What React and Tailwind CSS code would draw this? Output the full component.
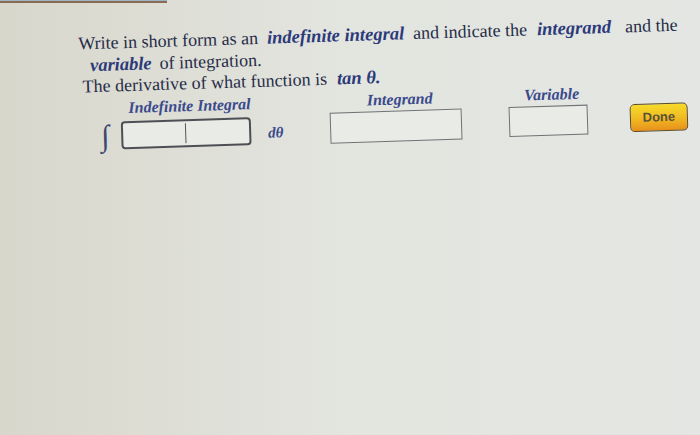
import React from "react";

const serif = { fontFamily: '"Liberation Serif", "Times New Roman", serif' };

function Box({ className }) {
  return <div className={`shrink-0 bg-[#e9ebe6] ${className}`} />;
}

export default function App() {
  return (
    <div
      className="relative w-[700px] h-[435px] overflow-hidden bg-gradient-to-r from-[#d8d7cc] via-[#e3e5df] to-[#e3e6e2]"
      style={serif}
    >
      {/* edge of the monitor frame */}
      <div className="h-[1px] w-[167px] bg-[#9fb4c4]" />
      <div className="h-[2px] w-[167px] bg-[#8a6a52]" />

      <div className="origin-top-left rotate-[-1.8deg] pt-[32px] text-[18px] leading-[22px] text-[#262c48]">
        {/* question text */}
        <div className="ml-[77px] whitespace-nowrap">
          <span>Write in short form as an</span>
          <span className="ml-[9px] text-[18.5px] font-bold italic text-[#2c3a7a]">indefinite integral</span>
          <span className="ml-[9px]">and indicate the</span>
          <span className="ml-[10px] text-[18.5px] font-bold italic text-[#2c3a7a]">integrand</span>
          <span className="ml-[14px]">and the</span>
        </div>
        <div className="ml-[88px] whitespace-nowrap">
          <span className="text-[18.5px] font-bold italic text-[#2c3a7a]">variable</span>
          <span className="ml-[8px]">of integration.</span>
        </div>
        <div className="ml-[80px] -mt-[1px] whitespace-nowrap">
          <span>The derivative of what function is</span>
          <span className="ml-[10px] text-[18.5px] font-bold italic text-[#2c3a7a]">tan θ.</span>
        </div>

        {/* column labels */}
        <div className="mt-[2px] flex h-[20px] items-center text-[16px] font-bold italic text-[#3a4a8c]">
          <div className="w-[326px] pl-[125px] whitespace-nowrap">Indefinite Integral</div>
          <div className="w-[132px] pl-[9px] text-center">Integrand</div>
          <div className="ml-[47px] w-[79px] pl-[8px] text-center">Variable</div>
        </div>

        {/* answer row */}
        <div className="mt-[1px] flex items-start">
          <span className="ml-[97px] mt-[1px] w-[20px] text-[30px] leading-[30px] font-light text-[#3d4670]">∫</span>
          <div className="mt-[2px] flex h-[28px] w-[130px] shrink-0 items-center rounded-[4px] border-2 border-[#4d4f55] bg-[#e9ebe6]">
            <div className="ml-[62px] h-[20px] w-[1px] bg-[#55575c]" />
          </div>
          <span className="ml-[17px] mt-[9px] w-[62px] text-[15px] leading-[18px] font-bold italic text-[#3a4a8c]">dθ</span>
          <Box className="h-[31px] w-[132px] border-[1.5px] border-[#707276]" />
          <Box className="ml-[47px] h-[30px] w-[79px] border-[1.5px] border-[#707276]" />
          <button
            className="ml-[42px] mt-[1px] flex h-[28px] w-[58px] shrink-0 items-center justify-center rounded-[5px] border-[1.5px] border-[#5c4c24] bg-gradient-to-b from-[#f6da2a] via-[#f0bd22] to-[#e8901c] text-[13px] font-bold text-[#5a5238]"
            style={{ fontFamily: '"Liberation Sans", Arial, sans-serif' }}
          >
            Done
          </button>
        </div>
      </div>
    </div>
  );
}
